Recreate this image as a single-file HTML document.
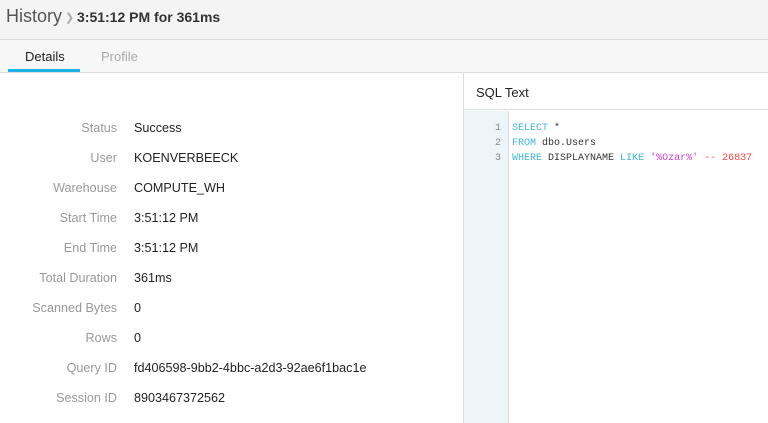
<!DOCTYPE html>
<html><head><style>
body{margin:0;width:768px;height:423px;overflow:hidden;background:#fff;font-family:"Liberation Sans",sans-serif;position:relative}
.hdr{position:absolute;left:0;top:0;width:768px;height:39px;background:#f4f4f4;border-bottom:1px solid #dcdcdc}
.hdr .h{position:absolute;left:6px;top:6px;font-size:18px;color:#555}
.hdr .ch{position:absolute;left:65px;top:11px;font-size:11px;color:#aaa}
.hdr .t{position:absolute;left:77px;top:9px;font-size:14px;font-weight:bold;color:#333}
.tabs{position:absolute;left:0;top:40px;width:768px;height:32px;background:#f7f7f7;border-bottom:1px solid #dcdcdc}
.tab{position:absolute;top:9px;font-size:13px}
.ul{position:absolute;left:8px;top:29px;width:72px;height:3px;background:#1ab3e8}
.lab{position:absolute;right:651px;font-size:12.6px;color:#999;text-align:right;white-space:nowrap}
.val{position:absolute;left:134px;font-size:12.6px;color:#222;white-space:nowrap}
.rp{position:absolute;left:463px;top:73px;width:305px;height:350px;border-left:1px solid #ddd}
.rh{height:37px;border-bottom:1px solid #ddd;font-size:13px;color:#222;padding:12px 0 0 12px;box-sizing:border-box}
.gut{position:absolute;left:0;top:38px;width:44px;height:312px;background:#eef5f9;border-right:1px solid #ddd}
.code{font-family:"Liberation Mono",monospace;font-size:10px;line-height:15px}
.ln{position:absolute;left:0;top:48px;width:37px;text-align:right;color:#888}
.src{position:absolute;left:48px;top:48px;color:#333;white-space:pre}
.k{color:#3fb5d8}.s{color:#d23ed2}.c{color:#f44}
</style></head><body>
<div class="hdr"><span class="h">History</span><span class="ch">❯</span><span class="t">3:51:12 PM for 361ms</span></div>
<div class="tabs"><span class="tab" style="left:25px;color:#222">Details</span><span class="tab" style="left:101px;color:#aaa">Profile</span><div class="ul"></div></div>
<div class="lab" style="top:121px">Status</div><div class="val" style="top:121px">Success</div>
<div class="lab" style="top:151px">User</div><div class="val" style="top:151px">KOENVERBEECK</div>
<div class="lab" style="top:181px">Warehouse</div><div class="val" style="top:181px">COMPUTE_WH</div>
<div class="lab" style="top:211px">Start Time</div><div class="val" style="top:211px">3:51:12 PM</div>
<div class="lab" style="top:241px">End Time</div><div class="val" style="top:241px">3:51:12 PM</div>
<div class="lab" style="top:271px">Total Duration</div><div class="val" style="top:271px">361ms</div>
<div class="lab" style="top:301px">Scanned Bytes</div><div class="val" style="top:301px">0</div>
<div class="lab" style="top:331px">Rows</div><div class="val" style="top:331px">0</div>
<div class="lab" style="top:361px">Query ID</div><div class="val" style="top:361px">fd406598-9bb2-4bbc-a2d3-92ae6f1bac1e</div>
<div class="lab" style="top:391px">Session ID</div><div class="val" style="top:391px">8903467372562</div>
<div class="rp"><div class="rh">SQL Text</div><div class="gut"></div>
<div class="code ln">1<br>2<br>3</div>
<div class="code src"><span class="k">SELECT</span> *
<span class="k">FROM</span> dbo.Users
<span class="k">WHERE</span> DISPLAYNAME <span class="k">LIKE</span> <span class="s">'%Ozar%'</span> <span class="c">-- 26837</span></div>
</div>
</body></html>
